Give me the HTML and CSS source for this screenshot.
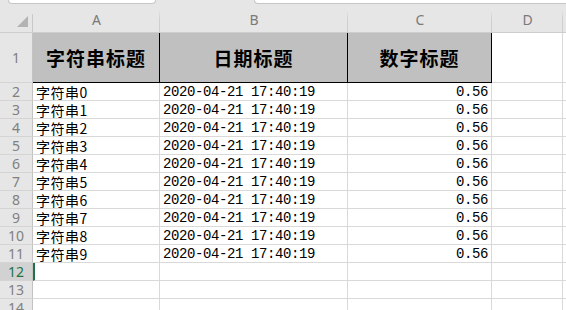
FILE: index.html
```html
<!DOCTYPE html>
<html>
<head>
    <title>Sheet1</title>
    <link rel="stylesheet" href="styles.css">
</head>
<body>
    <div class="topbar">
        <div class="name-box"></div>
        <div class="formula-box"></div>
    </div>
    <div class="sheet" id="sheet">
        <div class="corner"><span class="tri"></span></div>
        <div class="col-head">A</div>
        <div class="col-head">B</div>
        <div class="col-head">C</div>
        <div class="col-head">D</div>
        <div class="col-head last"></div>

        <div class="row-head title-row">1</div>
        <div class="cell title">字符串标题</div>
        <div class="cell title">日期标题</div>
        <div class="cell title">数字标题</div>
        <div class="cell"></div>
        <div class="cell"></div>
    </div>
    <script>
        var sheet = document.getElementById('sheet');
        for (var i = 0; i < 13; i++) {
            var n = i + 2;
            var active = n === 12;
            var html = '<div class="row-head' + (active ? ' active' : '') + '">' + n + '</div>';
            if (i < 10) {
                html += '<div class="cell text">字符串' + i + '</div>' +
                        '<div class="cell mono">2020-04-21 17:40:19</div>' +
                        '<div class="cell mono num">0.56</div>';
            } else {
                html += '<div class="cell' + (active ? ' selected' : '') + '"></div>' +
                        '<div class="cell"></div><div class="cell"></div>';
            }
            html += '<div class="cell"></div><div class="cell"></div>';
            sheet.insertAdjacentHTML('beforeend', html);
        }
    </script>
</body>
</html>
```

FILE: styles.css
```css
body {
    margin: 0;
    width: 566px;
    height: 310px;
    overflow: hidden;
    background: #e6e6e6;
    font-family: "Noto Sans", sans-serif;
}

.topbar {
    display: flex;
    height: 4px;
    background: #e6e6e6;
}

.name-box {
    margin-left: 8px;
    width: 146px;
    background: #fff;
    border: 1px solid #c6c6c6;
    border-top: none;
    border-radius: 0 0 5px 5px;
}

.formula-box {
    margin-left: 98px;
    flex: 1;
    background: #fff;
    border: 1px solid #c6c6c6;
    border-top: none;
    border-right: none;
    border-radius: 0 0 0 5px;
}

.sheet {
    display: grid;
    grid-template-columns: 33px 127px 188px 144px 71px 1fr;
    grid-template-rows: 29px 50px;
    grid-auto-rows: 18px;
}

.sheet > div {
    box-sizing: border-box;
}

.corner {
    display: flex;
    justify-content: flex-end;
    align-items: flex-end;
    padding: 0 5px 5px 0;
    border-bottom: 1px solid #cdcdcd;
    background: linear-gradient(#c8c8c8, #c8c8c8) right bottom / 1px 18px no-repeat, #e6e6e6;
}

.tri {
    width: 11px;
    height: 11px;
    background: #b3b3b3;
    clip-path: polygon(100% 0, 100% 100%, 0 100%);
}

.col-head {
    display: flex;
    align-items: center;
    justify-content: center;
    padding-top: 3px;
    font-size: 14px;
    color: #7a7a7a;
    border-bottom: 1px solid #cdcdcd;
    background: linear-gradient(to bottom, rgba(200, 200, 200, 0), #cfcfcf 40%) right bottom / 1px 22px no-repeat, #e6e6e6;
}

.row-head {
    display: flex;
    align-items: center;
    justify-content: center;
    font-size: 14px;
    line-height: 1;
    color: #808080;
    background: #e6e6e6;
    border-right: 1px solid #c3c3c3;
    border-bottom: 1px solid #d4d4d4;
}

.row-head.active {
    background: #d2d2d2;
    color: #217346;
}

.cell {
    display: flex;
    align-items: center;
    background: #fff;
    border-right: 1px solid #d9d9d9;
    border-bottom: 1px solid #d9d9d9;
    padding: 0 3px;
    line-height: 1;
    white-space: nowrap;
    overflow: hidden;
    color: #000;
}

.cell.title {
    justify-content: center;
    background: #c0c0c0;
    border-right-color: #000;
    border-bottom-color: #000;
    font-family: "Noto Sans CJK SC", sans-serif;
    font-weight: bold;
    font-size: 19px;
    letter-spacing: 1px;
}

.cell.text {
    font-family: "Noto Sans CJK SC", sans-serif;
    font-size: 14px;
    letter-spacing: 0.5px;
}

.cell.mono {
    font-family: "Liberation Mono", monospace;
    font-size: 14px;
    letter-spacing: -0.4px;
    padding-top: 1px;
}

.cell.num {
    justify-content: flex-end;
}

.cell.selected {
    border-left: 2px solid #217346;
}
```
